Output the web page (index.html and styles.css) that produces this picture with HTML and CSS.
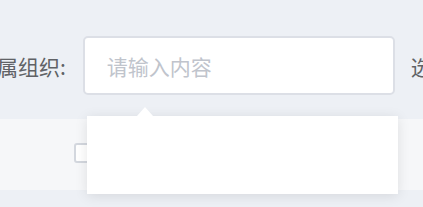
FILE: index.html
```html
<!DOCTYPE html>
<html lang="zh-Hans">
<head>
    <meta charset="UTF-8">
    <meta name="viewport" content="width=device-width, initial-scale=1.0">
    <title>查询</title>
    <link rel="stylesheet" href="styles.css">
</head>
<body>
<!-- 查询条件 -->
<div class="form-row">
    <label class="form-label">所属组织:</label>
    <div class="input-wrap">
        <input class="form-input" type="text" placeholder="请输入内容">
    </div>
    <label class="form-label next">选择状态:</label>
</div>
<!-- 表格 -->
<div class="table-head">
    <span class="checkbox"></span>
</div>
<!-- 下拉框 -->
<div class="popper">
    <span class="popper-arrow"></span>
</div>
</body>
</html>
```

FILE: styles.css
```css
* { margin: 0; padding: 0; box-sizing: border-box; }
html, body { width: 100%; height: 100%; overflow: hidden; }
input { outline: none; }

body {
    background: #edf0f5;
    font-family: "Noto Sans CJK SC", "Noto Sans", sans-serif;
    color: #606266;
    position: relative;
}

/* 查询条件 */
.form-row {
    display: flex;
    align-items: center;
    margin-left: -24px;
    padding-top: 36px;
    white-space: nowrap;
}
.form-label {
    font-size: 21px;
    line-height: 24px;
    margin-right: 17px;
}
.form-label.next {
    margin-left: 16px;
}
.input-wrap {
    width: 312px;
    height: 59px;
    flex-shrink: 0;
}
.form-input {
    width: 100%;
    height: 100%;
    border: 2px solid #dcdfe6;
    border-radius: 5px;
    background: #fff;
    padding: 0 22px;
    font-family: inherit;
    font-size: 21px;
    color: #606266;
}
.form-input::placeholder {
    color: #c0c4cc;
}

/* 表格 */
.table-head {
    margin-top: 24px;
    height: 71px;
    background: #f6f7f9;
    padding: 24px 0 0 74px;
}
.checkbox {
    display: block;
    width: 20px;
    height: 20px;
    border: 2px solid #d3d7de;
    border-radius: 3px;
    background: #fff;
}

/* 下拉框 */
.popper {
    position: absolute;
    left: 87px;
    top: 116px;
    width: 311px;
    height: 78px;
    background: #fff;
    box-shadow: 0 2px 12px 0 rgba(0, 0, 0, .1);
}
.popper-arrow {
    position: absolute;
    left: 50px;
    top: -9px;
    width: 0;
    height: 0;
    border-left: 8px solid transparent;
    border-right: 8px solid transparent;
    border-bottom: 9px solid #fff;
}
```
